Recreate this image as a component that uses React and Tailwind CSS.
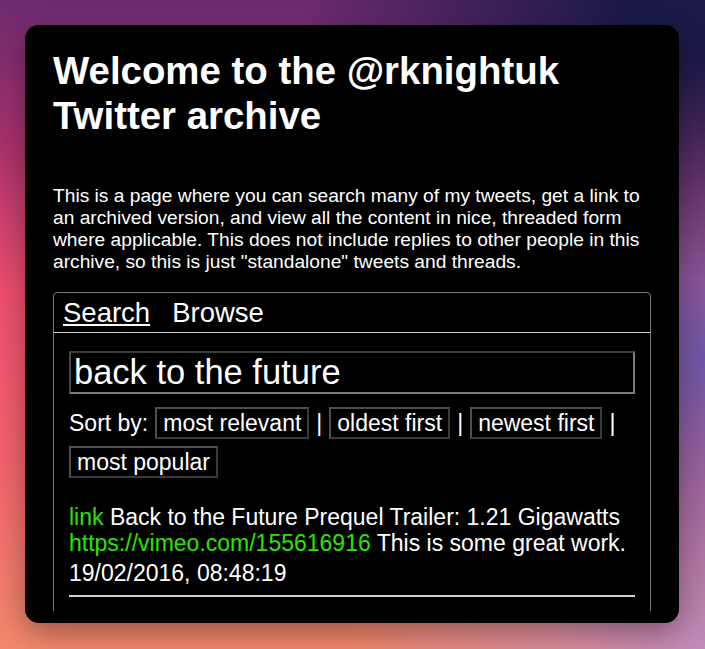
import { useState } from 'react';

// ── Sort options shown under the search box ──────────────────────────────────
const SORTS = ['most relevant', 'oldest first', 'newest first', 'most popular'];

const TWEETS = [
  {
    id: '699916',
    text: 'Back to the Future Prequel Trailer: 1.21 Gigawatts',
    url: 'https://vimeo.com/155616916',
    tail: 'This is some great work.',
    date: '19/02/2016, 08:48:19',
  },
];

function SortButton({ label, onClick }) {
  return (
    <button
      onClick={onClick}
      className="h-[32px] px-[6px] border-2 border-t-[#4f4f4f] border-l-[#4f4f4f] border-b-[#3a3a3a] border-r-[#3a3a3a] bg-black text-white leading-[26px]"
    >
      {label}
    </button>
  );
}

function Tweet({ tweet }) {
  return (
    <div className="mt-[26.5px]">
      <p className="leading-[26.4px]">
        <a href="#" className="text-[#2ae400]">link</a> {tweet.text}{' '}
        <a href="#" className="text-[#2ae400]">{tweet.url}</a> {tweet.tail}
      </p>
      <p className="mt-[3px] leading-[26.4px]">{tweet.date}</p>
      <div className="mt-[9px] border-t-2 border-[#d2d2d2]" />
    </div>
  );
}

export default function App() {
  const [tab, setTab] = useState('search');
  const [sort, setSort] = useState('most relevant');

  return (
    <div className="h-[649px] overflow-hidden pt-[25px] pl-[25px] font-['Liberation_Sans',Arial,sans-serif] text-white bg-[radial-gradient(80%_60%_at_100%_0%,#1c1a48_0%,#1c1a48_15%,rgba(28,26,72,0)_72%),radial-gradient(55%_65%_at_100%_55%,#6c58a8_0%,rgba(108,88,168,0)_75%),radial-gradient(60%_50%_at_100%_100%,#c890bc_0%,rgba(200,144,188,0)_85%),linear-gradient(to_bottom,#6b2b6f_0%,#a8326c_22%,#ee4f6e_45%,#f3626c_70%,#f2896c_100%)]">
      <div className="w-[654px] h-[598px] rounded-[14px] bg-black pt-[23px] px-[28px] pb-[12px] shadow-[0_10px_30px_rgba(0,0,0,0.35)]">
        <div className="h-full overflow-hidden">
          {/* Header */}
          <h1 className="text-[38.4px] font-bold leading-[45px]">
            Welcome to the @rknightuk Twitter archive
          </h1>
          <p className="mt-[47px] text-[19.2px] leading-[22px]">
            This is a page where you can search many of my tweets, get a link to an archived
            version, and view all the content in nice, threaded form where applicable. This does
            not include replies to other people in this archive, so this is just "standalone"
            tweets and threads.
          </p>

          {/* Search / Browse panel */}
          <div className="mt-[19px] border border-[#7a7a7a] rounded-t-[4px]">
            <div className="flex gap-[22px] px-[9px] pt-[3.5px] pb-[4.5px] border-b border-[#cfcfcf] text-[27.5px] leading-[31px]">
              <button onClick={() => setTab('search')} className={tab === 'search' ? 'underline' : ''}>
                Search
              </button>
              <button onClick={() => setTab('browse')} className={tab === 'browse' ? 'underline' : ''}>
                Browse
              </button>
            </div>

            <div className="px-[15px] pt-[18px] pb-[60px] text-[23px]">
              <input
                defaultValue="back to the future"
                className="w-full h-[43px] px-[3px] border-2 border-t-[#3a3a3a] border-l-[#4a4a4a] border-b-[#7c7c7c] border-r-[#7c7c7c] bg-black text-white text-[34.5px] outline-none"
              />

              <div className="mt-[12.5px] flex flex-wrap items-baseline gap-y-[7px] leading-[26.4px]">
                <span className="mr-[7px]">Sort by:</span>
                {SORTS.map((s, i) => (
                  <div key={s} className="flex items-baseline">
                    <SortButton label={s} onClick={() => setSort(s)} />
                    {i < SORTS.length - 1 && <span className="mx-[7px]">|</span>}
                  </div>
                ))}
              </div>

              {TWEETS.map(t => (
                <Tweet key={t.id} tweet={t} />
              ))}
            </div>
          </div>
        </div>
      </div>
    </div>
  );
}
